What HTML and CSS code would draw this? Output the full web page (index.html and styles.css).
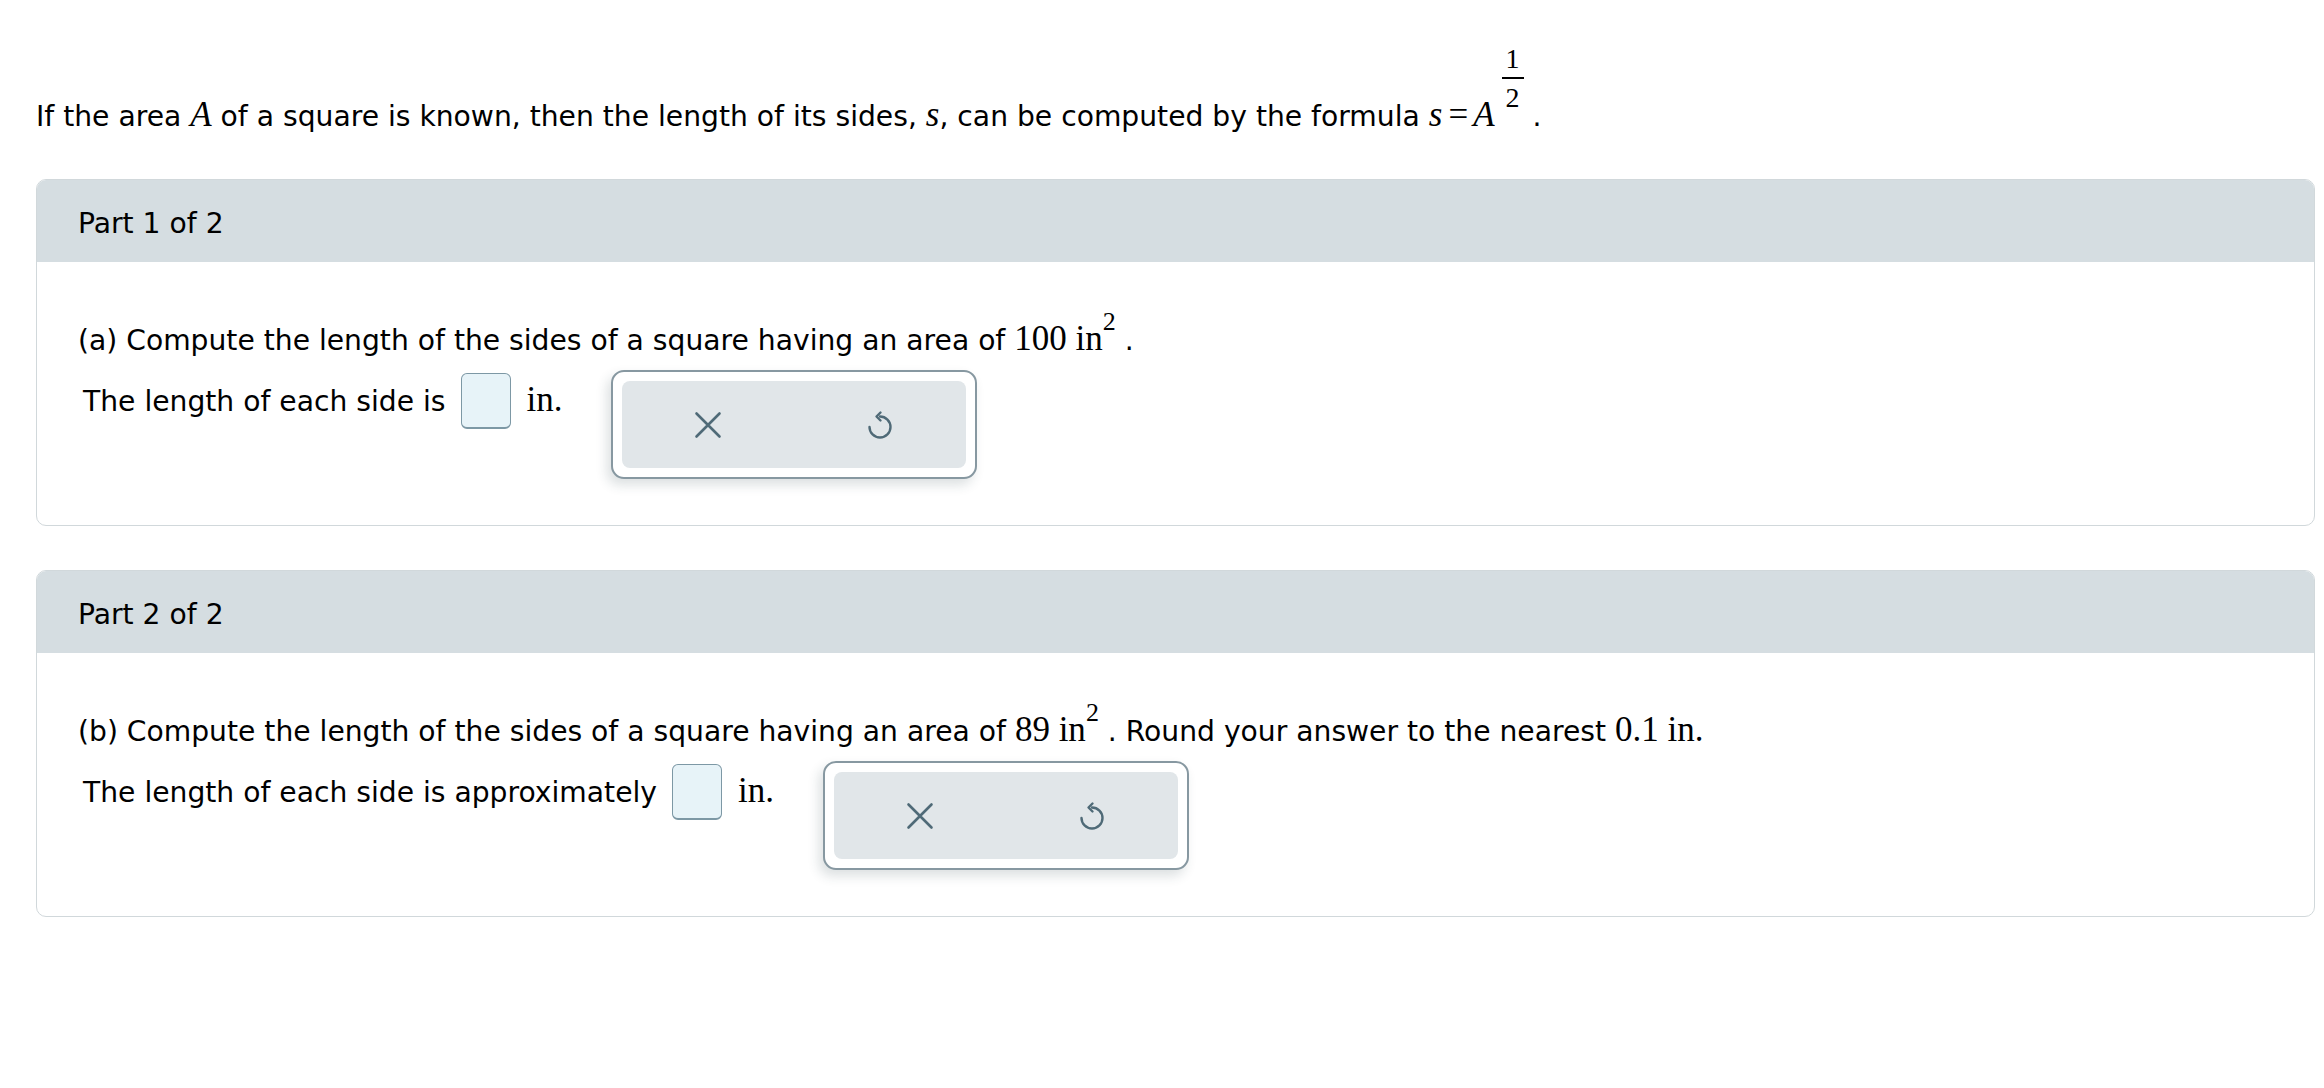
FILE: index.html
```html
<!DOCTYPE html>
<html lang="en">
<head>
<meta charset="utf-8">
<title>Square side length</title>
<link rel="stylesheet" href="styles.css">
</head>
<body>
<div class="page">
  <p class="intro">If the area <span class="m mi">A</span> of a square is known, then the length of its sides, <span class="m mi">s</span>, can be computed by the formula <span class="m"><span class="mi">s</span><span class="eq">=</span><span class="mi">A</span></span><span class="frac"><span class="num">1</span><span class="bar"></span><span class="den">2</span></span> .</p>

  <section class="card">
    <div class="card-head">Part 1 of 2</div>
    <div class="card-body">
      <p class="q">(a) Compute the length of the sides of a square having an area of <span class="m">100 in</span><span class="sup">2</span> .</p>
      <div class="answer">
        <span class="lead">The length of each side is</span>
        <span class="box"></span>
        <span class="unit">in.</span>
        <div class="tools">
          <div class="tools-inner">
            <button class="tool" type="button" aria-label="Clear">
              <svg class="ic-x" viewBox="0 0 32 32" width="32" height="32"><path d="M4.5 4.5 L27.5 27.5 M27.5 4.5 L4.5 27.5"/></svg>
            </button>
            <button class="tool" type="button" aria-label="Undo">
              <svg class="ic-undo" viewBox="0 0 32 32" width="32" height="32"><path d="M16 7.5 A10.5 10.5 0 1 1 5.5 18"/><path d="M16.5 3.5 L12.5 7.5 L16.5 11.5"/></svg>
            </button>
          </div>
        </div>
      </div>
    </div>
  </section>

  <section class="card">
    <div class="card-head">Part 2 of 2</div>
    <div class="card-body">
      <p class="q">(b) Compute the length of the sides of a square having an area of <span class="m">89 in</span><span class="sup">2</span> . Round your answer to the nearest <span class="m">0.1 in.</span></p>
      <div class="answer">
        <span class="lead">The length of each side is approximately</span>
        <span class="box"></span>
        <span class="unit">in.</span>
        <div class="tools">
          <div class="tools-inner">
            <button class="tool" type="button" aria-label="Clear">
              <svg class="ic-x" viewBox="0 0 32 32" width="32" height="32"><path d="M4.5 4.5 L27.5 27.5 M27.5 4.5 L4.5 27.5"/></svg>
            </button>
            <button class="tool" type="button" aria-label="Undo">
              <svg class="ic-undo" viewBox="0 0 32 32" width="32" height="32"><path d="M16 7.5 A10.5 10.5 0 1 1 5.5 18"/><path d="M16.5 3.5 L12.5 7.5 L16.5 11.5"/></svg>
            </button>
          </div>
        </div>
      </div>
    </div>
  </section>
</div>
</body>
</html>
```

FILE: styles.css
```css
html, body {
  margin: 0;
  background: #ffffff;
}

body {
  font-family: "DejaVu Sans", Verdana, sans-serif;
  font-size: 28.2px;
  color: #000000;
}

.page {
  padding: 46px 9px 40px 36px;
}

.intro {
  margin: 0;
  line-height: 40px;
}

.m {
  font-family: "Liberation Serif", "Times New Roman", serif;
  font-size: 35px;
}

.mi {
  font-style: italic;
}

.eq {
  font-style: normal;
  padding: 0 5px 0 6px;
}

.frac {
  display: inline-flex;
  flex-direction: column;
  align-items: center;
  font-family: "Liberation Serif", "Times New Roman", serif;
  font-size: 28px;
  line-height: 26px;
  vertical-align: 58px;
  margin-left: 7px;
}

.bar {
  width: 22px;
  height: 1.5px;
  background: #000;
  margin: 5px 0 6.5px;
}

.sup {
  font-family: "Liberation Serif", "Times New Roman", serif;
  font-size: 26px;
  line-height: 0;
  vertical-align: 20px;
}

.card {
  margin-top: 42px;
  border: 1.5px solid #d1d8db;
  border-radius: 10px;
  overflow: hidden;
  background: #fff;
}

.card + .card {
  margin-top: 44px;
}

.card-head {
  background: #d5dde1;
  height: 82px;
  box-sizing: border-box;
  padding: 5px 0 0 41px;
  line-height: 77px;
}

.card-body {
  padding: 57px 0 46px 41px;
}

.q {
  margin: 0;
  line-height: 40px;
}

.answer {
  display: flex;
  align-items: flex-start;
  margin-top: 9px;
  padding-left: 5px;
}

.lead {
  margin-top: 15px;
  line-height: 34px;
}

.box {
  width: 50px;
  height: 56px;
  box-sizing: border-box;
  margin: 3px 16px 0 15px;
  background: #e7f3f8;
  border: 1.5px solid #7d98a5;
  border-bottom-width: 2.5px;
  border-radius: 6px;
}

.unit {
  margin-top: 10px;
  font-family: "Liberation Serif", "Times New Roman", serif;
  font-size: 35px;
  line-height: 40px;
}

.tools {
  margin-left: 49px;
  width: 366px;
  height: 109px;
  box-sizing: border-box;
  padding: 9px;
  background: #ffffff;
  border: 2px solid #8798a1;
  border-radius: 13px;
  box-shadow: -4px 6px 12px rgba(40, 60, 70, 0.16);
}

.tools-inner {
  display: flex;
  height: 100%;
  background: #e1e6e9;
  border-radius: 8px;
}

.tool {
  flex: 1;
  display: flex;
  align-items: center;
  justify-content: center;
  background: none;
  border: 0;
  padding: 0;
  margin: 0;
}

.tool svg {
  display: block;
  fill: none;
  stroke: #4f6a77;
  stroke-linecap: round;
  stroke-linejoin: round;
}

.ic-x {
  stroke-width: 2.6;
}

.ic-undo {
  stroke-width: 2.4;
}
```
